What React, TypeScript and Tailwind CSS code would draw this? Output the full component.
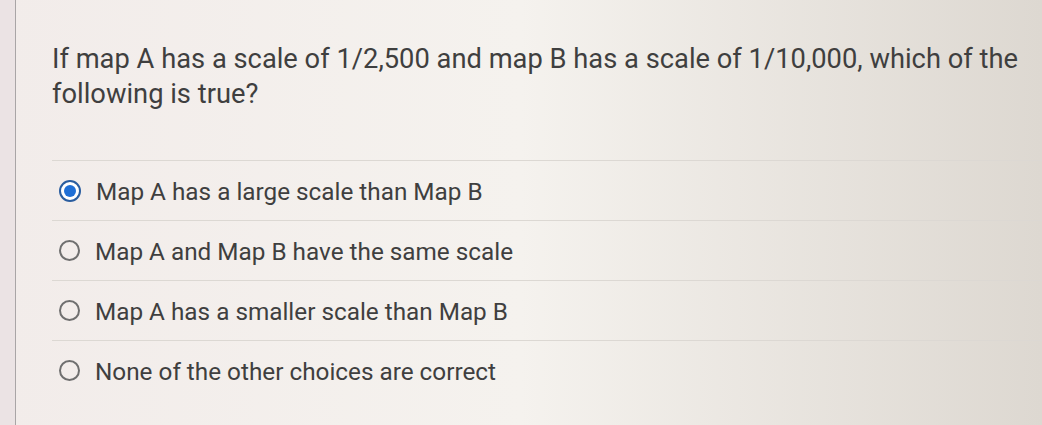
const options = [
  "Map A has a large scale than Map B",
  "Map A and Map B have the same scale",
  "Map A has a smaller scale than Map B",
  "None of the other choices are correct",
];

function Radio({ checked }: { checked: boolean }) {
  if (checked) {
    return (
      <span className="flex h-[22px] w-[22px] items-center justify-center rounded-full border-[2.5px] border-[#2a5d9f] bg-white">
        <span className="h-[12px] w-[12px] rounded-full bg-[#1f6fd6]" />
      </span>
    );
  }
  return <span className="h-[21px] w-[21px] rounded-full border-2 border-[#6f6f6f]" />;
}

export default function App() {
  return (
    <div
      className="flex h-[425px] w-[1042px] overflow-hidden bg-gradient-to-r from-[#f2ecea] via-[#f5f2ee] to-[#ddd8d1] text-[#3f3f3f]"
      style={{ fontFamily: "Roboto, 'Liberation Sans', sans-serif" }}
    >
      <div className="w-[15px] shrink-0 bg-[#ebe3e4]" />
      <div className="w-px shrink-0 bg-[#a9a5a6]" />
      <div className="flex-1 pl-[36px] pt-[42px]">
        <p className="pr-2 text-[27.3px] leading-[35px]">
          If map A has a scale of 1/2,500 and map B has a scale of 1/10,000, which of the following is true?
        </p>
        <div className="mt-[48px]">
          {options.map((o, i) => (
            <label
              key={o}
              className="flex h-[60px] items-center border-t border-[#dcd8d3] pl-[7px]"
            >
              <Radio checked={i === 0} />
              <span className="ml-[15px] pt-[3px] text-[24.3px]">{o}</span>
            </label>
          ))}
        </div>
      </div>
    </div>
  );
}
